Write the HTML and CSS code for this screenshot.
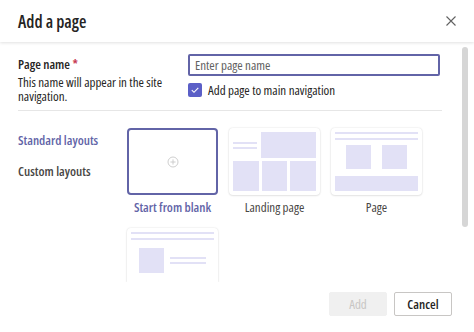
FILE: index.html
```html
<!DOCTYPE html>
<html lang="en">
<head>
	<meta charset="UTF-8">
	<title>Add a page</title>
	<link rel="stylesheet" href="styles.css">
</head>
<body>
<div class="dialog">
	<header class="dialog-header">
		<h1>Add a page</h1>
		<button class="close" type="button" aria-label="Close">
			<svg width="12" height="12" viewBox="0 0 12 12"><path d="M1.5 1.5 L10.5 10.5 M10.5 1.5 L1.5 10.5" stroke="#616161" stroke-width="1.1" fill="none"/></svg>
		</button>
	</header>

	<div class="dialog-body">
		<div class="scroll-thumb"></div>

		<section class="name-form">
			<div class="name-info">
				<label for="pageName" class="field-label">Page name <span class="req">*</span></label>
				<p class="hint">This name will appear in the site navigation.</p>
			</div>
			<div class="name-fields">
				<input id="pageName" class="text-input" type="text" placeholder="Enter page name">
				<label class="check-row">
					<span class="checkbox">
						<svg width="10" height="10" viewBox="0 0 10 10"><path d="M1.8 5.2 L4 7.3 L8.3 2.8" stroke="#fff" stroke-width="1.1" fill="none"/></svg>
					</span>
					Add page to main navigation
				</label>
			</div>
		</section>

		<section class="layouts">
			<nav class="layout-nav">
				<a class="nav-item active">Standard layouts</a>
				<a class="nav-item">Custom layouts</a>
			</nav>
			<div class="cards">
				<div class="card-item selected">
					<div class="card blank">
						<svg width="12" height="12" viewBox="0 0 12 12"><circle cx="6" cy="6" r="5" stroke="#c8c8c8" fill="none" stroke-width="0.9"/><path d="M6 3.4 V8.6 M3.4 6 H8.6" stroke="#c8c8c8" stroke-width="0.9"/></svg>
					</div>
					<div class="card-label">Start from blank</div>
				</div>

				<div class="card-item">
					<div class="card landing">
						<div class="lp-top">
							<div class="lp-lines"><span></span><span></span></div>
							<div class="block lp-hero"></div>
						</div>
						<div class="lp-bottom">
							<div class="block"></div>
							<div class="block"></div>
							<div class="block"></div>
						</div>
					</div>
					<div class="card-label">Landing page</div>
				</div>

				<div class="card-item">
					<div class="card plain">
						<span class="bar"></span>
						<span class="bar"></span>
						<div class="pg-squares">
							<div class="block"></div>
							<div class="block"></div>
						</div>
						<div class="block pg-foot"></div>
					</div>
					<div class="card-label">Page</div>
				</div>

				<div class="card-item">
					<div class="card custom">
						<span class="bar"></span>
						<span class="bar"></span>
						<div class="cu-row">
							<div class="block cu-sq"></div>
							<div class="cu-lines"><span></span><span></span></div>
						</div>
					</div>
				</div>
			</div>
		</section>
	</div>

	<footer class="dialog-footer">
		<button class="btn btn-disabled" type="button" disabled>Add</button>
		<button class="btn" type="button">Cancel</button>
	</footer>
</div>
</body>
</html>
```

FILE: styles.css
```css
*{
	box-sizing: border-box;
}

body{
	margin: 0;
	background: #fff;
	font-family: "Open Sans", "Noto Sans", sans-serif;
	font-stretch: 87%;
	color: #252423;
}

.dialog{
	width: 474px;
	height: 332px;
	display: flex;
	flex-direction: column;
	overflow: hidden;
}

/* header */
.dialog-header{
	height: 42px;
	flex: none;
	display: flex;
	align-items: center;
	justify-content: space-between;
	padding: 0 16px 0 18px;
	box-shadow: 0 1px 3px rgba(0,0,0,0.12);
	position: relative;
	z-index: 2;
}
.dialog-header h1{
	margin: 0;
	font-size: 17px;
	font-weight: 600;
	color: #252423;
}
.close{
	border: 0;
	background: none;
	padding: 0;
	width: 14px;
	height: 14px;
	display: flex;
	align-items: center;
	justify-content: center;
}

/* body */
.dialog-body{
	flex: 1;
	position: relative;
	overflow: hidden;
	padding: 12px 32px 0 18px;
}
.scroll-thumb{
	position: absolute;
	left: 462px;
	top: 5px;
	width: 6px;
	height: 180px;
	border-radius: 3px;
	background: #d6d6d6;
}

.name-form{
	display: grid;
	grid-template-columns: 170px 1fr;
	padding-bottom: 7px;
	border-bottom: 1px solid #e6e6e6;
}
.field-label{
	display: block;
	margin-top: 2px;
	font-size: 13px;
	font-weight: 600;
	line-height: 16px;
}
.req{
	color: #c4314b;
}
.hint{
	margin: 3px 0 0;
	font-size: 13px;
	line-height: 14px;
	color: #252423;
	width: 160px;
}
.text-input{
	display: block;
	width: 252px;
	height: 22px;
	border: 2px solid #6264a7;
	border-radius: 2px;
	padding: 0 5px;
	font-family: inherit;
	font-stretch: inherit;
	font-size: 13px;
	color: #252423;
}
.text-input::placeholder{
	color: #616161;
}
.check-row{
	display: flex;
	align-items: center;
	gap: 6px;
	margin-top: 7px;
	font-size: 13px;
	line-height: 14px;
}
.checkbox{
	width: 14px;
	height: 14px;
	border-radius: 2px;
	background: #5b5fc7;
	display: flex;
	align-items: center;
	justify-content: center;
}

/* layouts */
.layouts{
	display: grid;
	grid-template-columns: 109px 1fr;
	padding-top: 17px;
}
.layout-nav{
	display: flex;
	flex-direction: column;
	gap: 15px;
	padding-top: 4px;
}
.nav-item{
	font-size: 13px;
	line-height: 16px;
	font-weight: 600;
	color: #484644;
}
.nav-item.active{
	color: #6264a7;
}

.cards{
	display: grid;
	grid-template-columns: repeat(3, 91px);
	column-gap: 11px;
	row-gap: 13px;
}
.card-item{
	display: flex;
	flex-direction: column;
	align-items: center;
}
.card{
	width: 91px;
	height: 67px;
	border-radius: 4px;
	background: #fff;
	box-shadow: 0 0 2px rgba(0,0,0,0.14), 0 1px 2px rgba(0,0,0,0.08);
	padding: 4px;
	display: flex;
	flex-direction: column;
}
.card-label{
	margin-top: 5px;
	font-size: 13px;
	line-height: 15px;
	white-space: nowrap;
	color: #484644;
}
.selected .card{
	border: 2px solid #6264a7;
	box-shadow: none;
	align-items: center;
	justify-content: center;
}
.selected .card-label{
	color: #6264a7;
	font-weight: 600;
}

.block{
	background: #e2e1f6;
}

/* landing page thumb */
.lp-top{
	display: flex;
	gap: 4px;
	height: 26px;
}
.lp-lines{
	width: 24px;
	display: flex;
	flex-direction: column;
	justify-content: center;
	gap: 3px;
}
.lp-lines span{
	height: 2px;
	background: #e2e1f6;
}
.lp-hero{
	flex: 1;
}
.lp-bottom{
	flex: 1;
	display: flex;
	gap: 3px;
	margin-top: 3px;
}
.lp-bottom .block{
	flex: 1;
}

/* page thumb */
.bar{
	display: block;
	height: 2px;
	background: #e2e1f6;
	margin-bottom: 4px;
}
.pg-squares{
	display: flex;
	justify-content: space-around;
	padding: 1px 5px 0;
}
.pg-squares .block{
	width: 25px;
	height: 24px;
}
.pg-foot{
	height: 15px;
	margin-top: auto;
}

/* custom thumb */
.custom{
	height: 54px;
	border-radius: 4px 4px 0 0;
}
.cu-row{
	display: flex;
	align-items: center;
	gap: 6px;
	padding: 4px 8px 0;
}
.cu-sq{
	width: 25px;
	height: 25px;
}
.cu-lines{
	flex: 1;
	display: flex;
	flex-direction: column;
	gap: 3px;
}
.cu-lines span{
	height: 2px;
	background: #e2e1f6;
}

/* footer */
.dialog-footer{
	flex: none;
	height: 50px;
	display: flex;
	justify-content: flex-end;
	gap: 7px;
	padding: 10px 22px 0 0;
	background: #fff;
	position: relative;
	z-index: 2;
}
.btn{
	height: 24px;
	min-width: 58px;
	padding: 0 12px;
	border: 1px solid #c8c6c4;
	border-radius: 2px;
	background: #fff;
	font-family: inherit;
	font-stretch: inherit;
	font-size: 13px;
	font-weight: 600;
	color: #252423;
}
.btn-disabled{
	border-color: #f0f0f0;
	background: #f0f0f0;
	color: #c8c6c4;
	font-weight: 400;
}
```
